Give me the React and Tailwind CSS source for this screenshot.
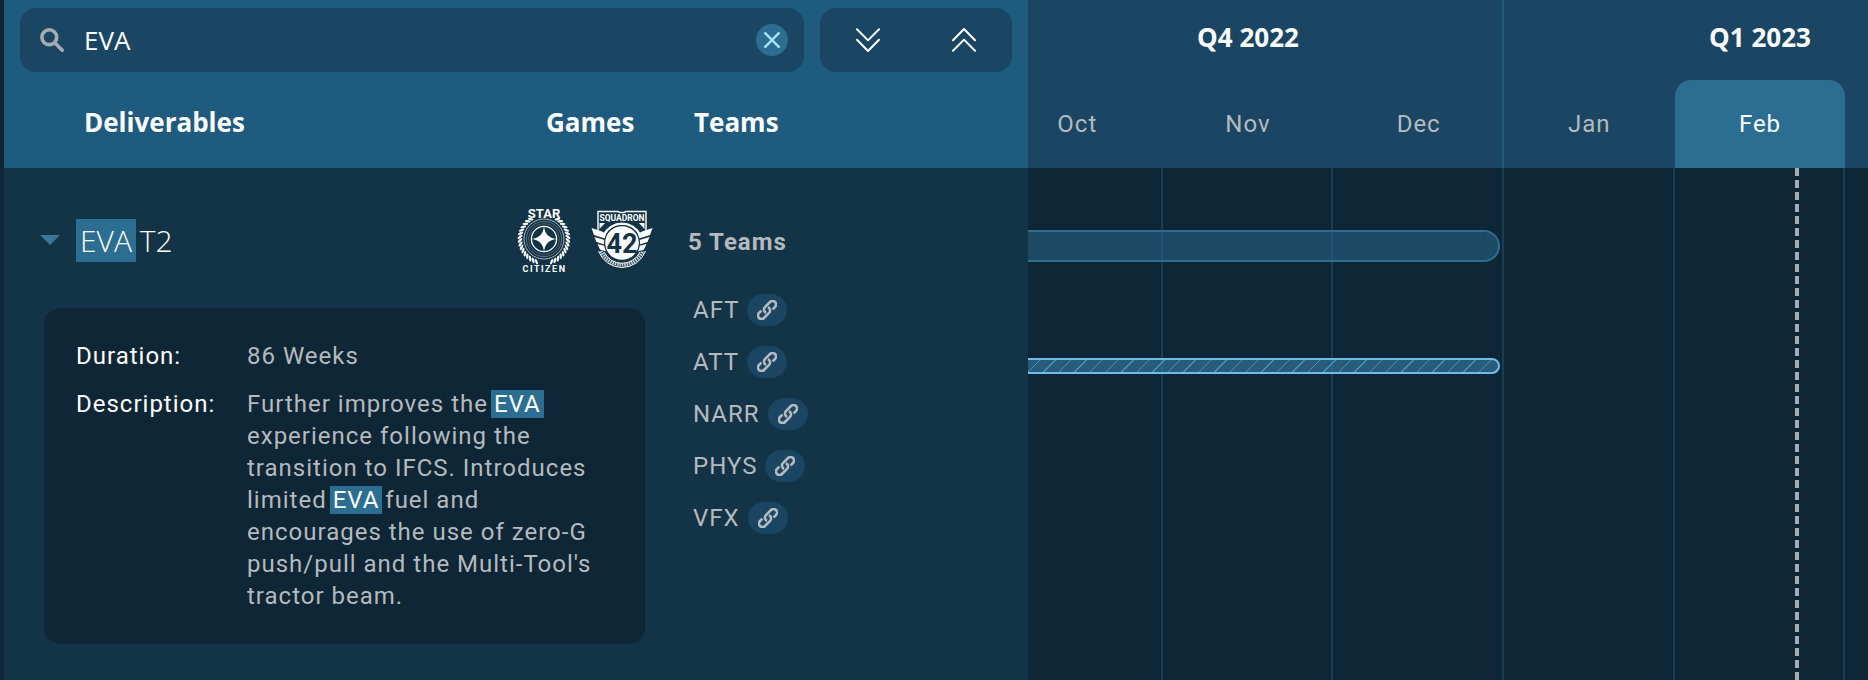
import React from 'react';

const teams = ['AFT', 'ATT', 'NARR', 'PHYS', 'VFX'];

const quarters = [
  { name: 'Q4 2022', months: ['Oct', 'Nov', 'Dec'] },
  { name: 'Q1 2023', months: ['Jan', 'Feb'] },
];

const currentMonth = 'Feb';

const SearchIcon = () => (
  <svg viewBox="0 0 24 24" className="size-6 shrink-0" fill="none" stroke="#a5abb0" strokeLinecap="round" aria-hidden="true">
    <circle cx="9.3" cy="9.2" r="7.4" strokeWidth="3.6" />
    <path d="M15 15 L22.2 22.2" strokeWidth="3.6" />
  </svg>
);

const Chevrons = ({ up }) => (
  <svg
    viewBox="0 0 24 24"
    className={up ? 'size-6 rotate-180' : 'size-6'}
    fill="none"
    stroke="#fff"
    strokeWidth="2"
    strokeLinecap="round"
    strokeLinejoin="round"
    aria-hidden="true"
  >
    <path d="M1 1.2 L12 12.4 L23 1.2" />
    <path d="M1 11.8 L12 23 L23 11.8" />
  </svg>
);

const LinkIcon = () => (
  <svg viewBox="-10 -10 20 20" className="size-5" fill="none" stroke="currentColor" strokeWidth="2.6" aria-hidden="true">
    <g transform="rotate(-45)">
      <path d="M-2.6 1.4 A3.5 3.5 0 0 1 0.6 -3.5 H7.8 A3.5 3.5 0 0 1 7.8 3.5 H4.4" />
      <path d="M2.6 -1.4 A3.5 3.5 0 0 1 -0.6 3.5 H-7.8 A3.5 3.5 0 0 1 -7.8 -3.5 H-4.4" />
    </g>
  </svg>
);

const wreathAngles = Array.from({ length: 16 }, (_, i) => 34 + i * 8.5);

const StarCitizenLogo = () => (
  <svg viewBox="0 0 56 68" className="h-[68px] w-14" fill="#fff" role="img" aria-label="Star Citizen">
    <text x="28" y="12" textAnchor="middle" fontFamily="Roboto, sans-serif" fontWeight="700" fontSize="13" letterSpacing="0">
      STAR
    </text>
    {[1, -1].map((side) => (
      <g key={side} transform={side === 1 ? undefined : 'translate(56 0) scale(-1 1)'}>
        {wreathAngles.map((angle) => (
          <ellipse
            key={angle}
            cx="28"
            cy="9"
            rx="3"
            ry="1.2"
            transform={`rotate(${angle} 28 33) rotate(-48 28 9)`}
          />
        ))}
      </g>
    ))}
    <circle cx="28" cy="33" r="20" fill="none" stroke="#fff" strokeWidth="0.9" opacity="0.7" />
    <circle cx="28" cy="33" r="17.6" fill="none" stroke="#fff" strokeWidth="0.6" opacity="0.5" />
    <circle cx="28" cy="33" r="15.4" fill="none" stroke="#fff" strokeWidth="0.6" opacity="0.35" />
    <circle cx="28" cy="33" r="12.6" fill="none" stroke="#fff" strokeWidth="1.3" />
    <path d="M28 19 Q28.4 32.6 42 33 Q28.4 33.4 28 47 Q27.6 33.4 14 33 Q27.6 32.6 28 19Z" />
    <path d="M28 25 Q29 32 35 33 Q29 34 28 41 Q27 34 21 33 Q27 32 28 25Z" />
    <circle cx="28" cy="33" r="3.4" />
    <text x="28.5" y="66" textAnchor="middle" fontFamily="Roboto, sans-serif" fontWeight="700" fontSize="9" letterSpacing="1.5">
      CITIZEN
    </text>
  </svg>
);

const SquadronLogo = () => (
  <svg viewBox="0 0 64 60" className="ml-[18px] h-[60px] w-16" fill="#fff" role="img" aria-label="Squadron 42">
    <path d="M8 21 V1.5 H28 L30 2.5 H34 L36 1.5 H56 V21" fill="none" stroke="#fff" strokeWidth="1.4" />
    <text x="32" y="11" textAnchor="middle" fontFamily="Roboto, sans-serif" fontWeight="700" fontSize="8.5" letterSpacing="0">
      SQUADRON
    </text>
    <path d="M9.5 13 H15 L9.5 19Z M54.5 13 H49 L54.5 19Z" />
    <path d="M14 25 A20 20 0 0 1 50 25" fill="none" stroke="#fff" strokeWidth="2.4" />
    <path d="M8.5 41 A25 25 0 0 0 55.5 41" fill="none" stroke="#fff" strokeWidth="1" />
    <path d="M11 41 A22.8 22.8 0 0 0 53 41" fill="none" stroke="#fff" strokeWidth="3.4" strokeDasharray="1.6 0.8" opacity="0.75" />
    <path d="M14 42 A20 20 0 0 0 50 42" fill="none" stroke="#fff" strokeWidth="1" />
    <path d="M1.5 18 L12 21.5 Q15 22.5 16.5 25 L15 28.5 L4 25Z M4.500 27 L14.500 30 L14.500 34.5 L6.500 32Z M7.500 34 L15 36 L16.500 41.500 L10 39.500Z" />
    <path d="M62.5 18 L52 21.5 Q49 22.5 47.5 25 L49 28.5 L60 25Z M59.500 27 L49.500 30 L49.500 34.5 L57.500 32Z M56.500 34 L49 36 L47.500 41.500 L54 39.500Z" />
    <circle cx="32" cy="33" r="18" fill="#133347" />
    <circle cx="32" cy="33" r="16.8" />
    <text x="32" y="42.5" textAnchor="middle" fill="#133347" fontFamily="Roboto, sans-serif" fontWeight="700" fontSize="27" letterSpacing="0">
      42
    </text>
  </svg>
);

const Mark = ({ children }) => <mark className="-mx-1 bg-[#2c6e91] px-[3px] text-white">{children}</mark>;

const Toolbar = () => (
  <div className="flex gap-4">
    <div className="flex h-16 flex-1 items-center rounded-2xl bg-[#1a4663] px-5 pr-4">
      <SearchIcon />
      <input
        type="text"
        defaultValue="EVA"
        aria-label="Search deliverables"
        className="ml-5 min-w-0 flex-1 bg-transparent font-['Open_Sans',sans-serif] text-[26px] tracking-normal text-white outline-none"
      />
      <button aria-label="Clear search" className="flex size-8 items-center justify-center rounded-full bg-[#2c6e91]">
        <svg viewBox="0 0 16 16" className="size-4" stroke="#a9dfff" strokeWidth="2.4" strokeLinecap="round" aria-hidden="true">
          <path d="M1.2 1.2 L14.8 14.8 M14.8 1.2 L1.2 14.8" />
        </svg>
      </button>
    </div>
    <div className="flex h-16 w-48 rounded-2xl bg-[#1a4663]">
      <button aria-label="Expand all" className="flex flex-1 items-center justify-center">
        <Chevrons />
      </button>
      <button aria-label="Collapse all" className="flex flex-1 items-center justify-center">
        <Chevrons up />
      </button>
    </div>
  </div>
);

const DeliverablesPanel = () => (
  <section className="flex w-[1024px] shrink-0 flex-col bg-[#133347]">
    <header className="h-42 bg-[#1f5b7f] px-4 pt-2">
      <Toolbar />
      <div className="flex h-24 items-center pt-1 pl-16 font-['Open_Sans',sans-serif] text-[26px] font-bold tracking-normal text-white">
        <h2 className="flex-1">Deliverables</h2>
        <h2 className="w-[148px]">Games</h2>
        <h2 className="w-[318px]">Teams</h2>
      </div>
    </header>

    <div className="flex pt-9">
      <div className="w-[650px] pl-10">
        <div className="flex h-[72px] items-center">
          <button aria-label="Collapse EVA T2" className="-ml-1">
            <svg viewBox="0 0 20 10" className="h-2.5 w-5" fill="#3d7599" aria-hidden="true">
              <path d="M0 0 H20 L10 10Z" />
            </svg>
          </button>
          <h3 className="ml-4 flex-1 font-['Open_Sans',sans-serif] text-[30px] leading-[43px] font-light tracking-normal text-white">
            <mark className="-mr-1 inline-block bg-[#2c6e91] px-1 text-white">EVA</mark> T2
          </h3>
          <StarCitizenLogo />
          <SquadronLogo />
        </div>
        <dl className="mt-8 mr-[9px] grid grid-cols-[171px_1fr] gap-y-4 rounded-2xl bg-[#0f2636] py-8 pr-6 pl-8 leading-8">
          <dt className="text-white">Duration:</dt>
          <dd>86 Weeks</dd>
          <dt className="text-white">Description:</dt>
          <dd className="max-w-[350px]">
            Further improves the <Mark>EVA</Mark> experience following the transition to IFCS. Introduces limited{' '}
            <Mark>EVA</Mark> fuel and encourages the use of zero-G push/pull and the Multi-Tool's tractor beam.
          </dd>
        </dl>
      </div>

      <div className="pt-[22px] pl-[34px]">
        <h4 className="leading-8 font-bold">5 Teams</h4>
        <ul className="mt-9 space-y-5 pl-[5px]">
          {teams.map((team) => (
            <li key={team} className="flex h-8 items-center gap-2">
              {team}
              <a href={`#${team}`} aria-label={`Link to ${team}`} className="flex h-8 w-10 items-center justify-center rounded-full bg-[#1a4663]">
                <LinkIcon />
              </a>
            </li>
          ))}
        </ul>
      </div>
    </div>
  </section>
);

const Timeline = () => (
  <section className="flex min-w-0 flex-1 flex-col overflow-hidden bg-[#0f2636]">
    <header className="-ml-9 flex h-42 bg-[#1a4663]">
      {quarters.map((quarter) => (
        <div key={quarter.name} className="w-[512px] shrink-0 shadow-[inset_-2px_0_#1f5b7f]">
          <h2 className="flex h-20 items-center justify-center pb-1.5 font-['Open_Sans',sans-serif] text-[26px] font-bold tracking-normal text-white">
            {quarter.name}
          </h2>
          <div className="grid h-22 grid-cols-3">
            {quarter.months.map((month) => (
              <div
                key={month}
                className={`flex items-center justify-center ${
                  month === currentMonth ? 'rounded-t-2xl bg-[#2c6e91] text-white' : ''
                }`}
              >
                {month}
              </div>
            ))}
          </div>
        </div>
      ))}
    </header>

    <div className="relative -ml-9 flex flex-1">
      {quarters.map((quarter) => (
        <div key={quarter.name} className="grid w-[512px] shrink-0 grid-cols-3">
          {quarter.months.map((month) => (
            <div key={month} className="relative border-r-2 border-[#183d57]">
              {month === currentMonth && (
                <div className="absolute inset-y-0 left-[120px] w-1 bg-[repeating-linear-gradient(to_bottom,#a5abb0_0_8px,transparent_8px_12px)]" />
              )}
            </div>
          ))}
        </div>
      ))}
      <div className="absolute top-[62px] left-0 h-8 w-[508px] rounded-r-full border-2 border-[#2c6e91] bg-[#2c6e91]/50" />
      <div className="absolute top-[190px] left-0 h-4 w-[508px] rounded-r-full border-2 border-[#6fbbe9] bg-[#3a80a5]/60 bg-[repeating-linear-gradient(135deg,transparent_0_10px,#4791b8_10px_11px)]" />
    </div>
  </section>
);

export default function App() {
  return (
    <main className="flex min-h-screen overflow-hidden bg-[#0f2636] pl-1 font-[Roboto,sans-serif] text-[24px] tracking-[1px] text-[#b4babe]">
      <DeliverablesPanel />
      <Timeline />
    </main>
  );
}
